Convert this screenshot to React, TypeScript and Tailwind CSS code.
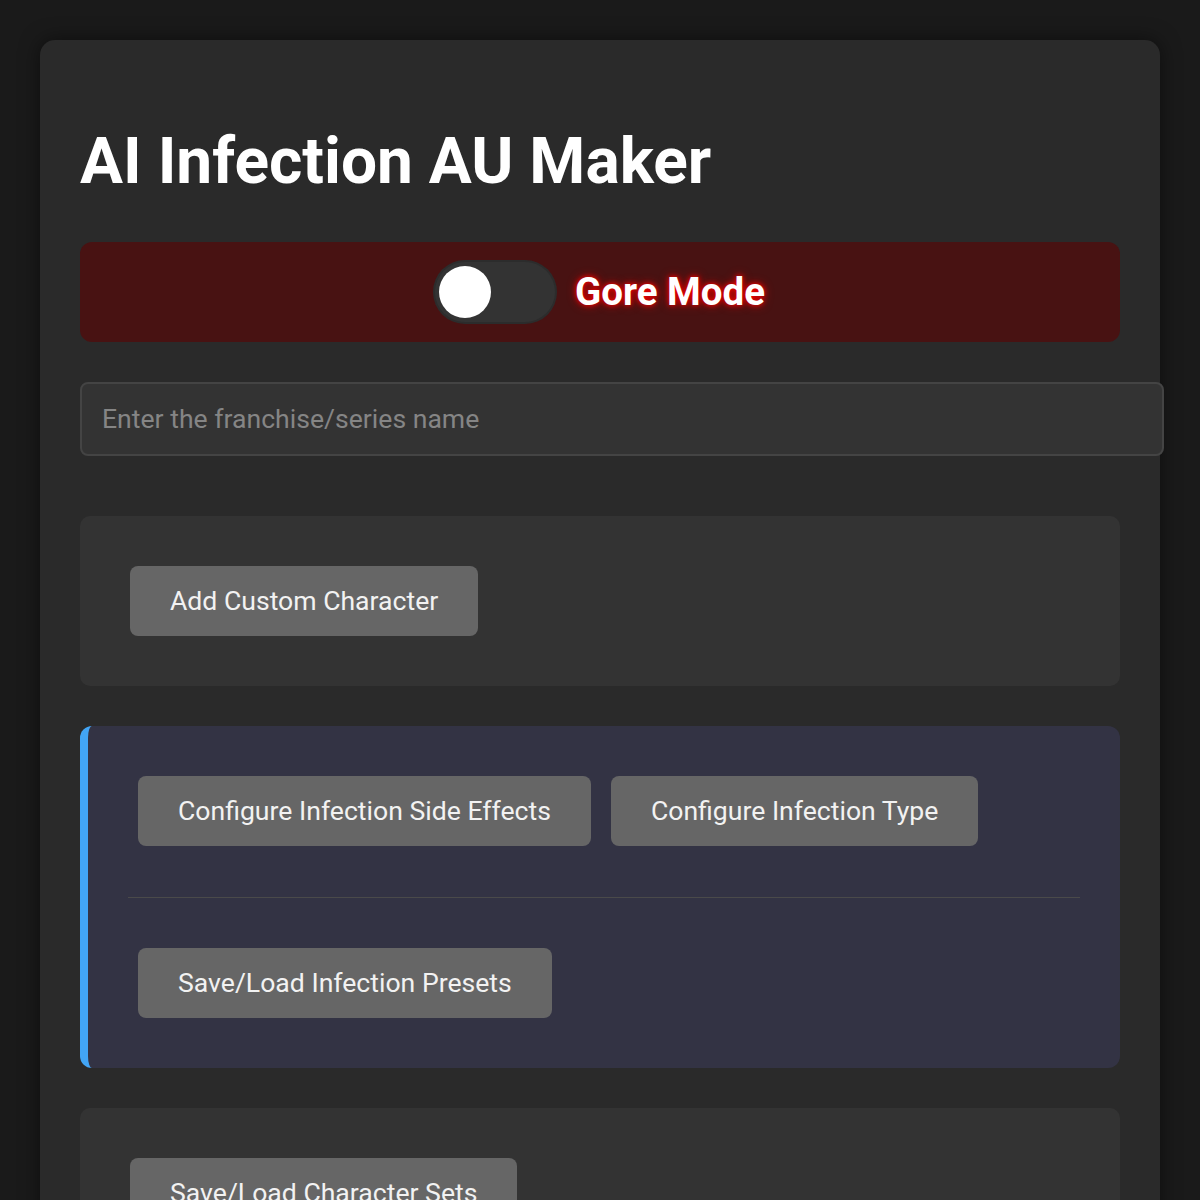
import React, { useState } from 'react';

const btn =
  'rounded-lg bg-[#666666] px-10 py-5 text-[26.6px] leading-[30px] text-[#f2f2f2] m-[10px]';

function Toggle({ on, onChange }: { on: boolean; onChange: (v: boolean) => void }) {
  return (
    <button
      onClick={() => onChange(!on)}
      className="relative h-[60px] w-[120px] shrink-0 rounded-full bg-[#333333] shadow-[0_0_0_2px_#2c2c2c]"
    >
      <span
        className={`absolute top-[4px] h-[52px] w-[52px] rounded-full bg-white ${on ? 'left-[64px]' : 'left-[4px]'}`}
      />
    </button>
  );
}

export default function App() {
  const [gore, setGore] = useState(false);

  return (
    <div className="min-h-[1200px] bg-[#1a1a1a] p-10 font-['Roboto',_'Liberation_Sans',_sans-serif]">
      <div className="rounded-[15px] bg-[#2a2a2a] p-10 shadow-[0_0_20px_rgba(0,0,0,0.5)]">
        {/* Title */}
        <h1 className="mb-[43px] mt-[44px] text-[64px] font-bold leading-[75px] text-white">
          AI Infection AU Maker
        </h1>

        {/* Gore mode bar */}
        <div className="flex h-[100px] items-center justify-center gap-5 rounded-xl bg-[#481212]">
          <Toggle on={gore} onChange={setGore} />
          <span className="text-[38.5px] font-bold text-white [text-shadow:0_0_5px_#ff0000,0_0_10px_#cc0000]">
            Gore Mode
          </span>
        </div>

        {/* Franchise input */}
        <input
          type="text"
          placeholder="Enter the franchise/series name"
          className="mt-10 box-content w-full rounded-lg border-2 border-[#444444] bg-[#333333] p-5 text-[26.6px] leading-[30px] text-white outline-none placeholder:text-[#858585]"
        />

        {/* Custom character */}
        <div className="mt-[60px] rounded-[10px] bg-[#333333] p-10">
          <div className="flex flex-wrap">
            <button className={btn}>Add Custom Character</button>
          </div>
        </div>

        {/* Infection settings */}
        <div className="mt-10 rounded-[12px] border-l-8 border-[#42a5f5] bg-[#333344] p-10">
          <div className="flex flex-wrap">
            <button className={btn}>Configure Infection Side Effects</button>
            <button className={btn}>Configure Infection Type</button>
          </div>
          <div className="mt-[41px] border-t border-[#4a4a4a] pt-10">
            <button className={btn}>Save/Load Infection Presets</button>
          </div>
        </div>

        {/* Character sets */}
        <div className="mt-10 rounded-[10px] bg-[#333333] p-10">
          <div className="flex flex-wrap">
            <button className={btn}>Save/Load Character Sets</button>
          </div>
        </div>
      </div>
    </div>
  );
}
